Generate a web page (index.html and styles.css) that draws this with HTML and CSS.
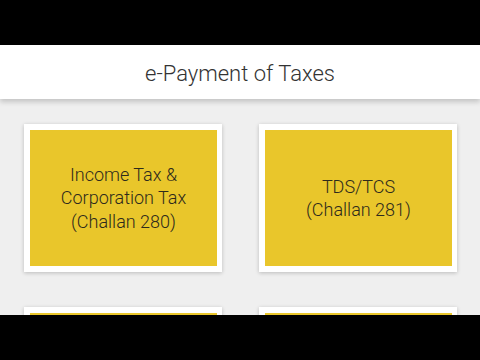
FILE: index.html
```html
<!DOCTYPE html>
<html>
<head>
<meta charset="utf-8">
<link rel="stylesheet" href="styles.css">
</head>
<body>
<div class="letterbox"></div>
<div class="screen">
  <header class="appbar">e-Payment of Taxes</header>
  <main class="grid">
    <div class="card"><div class="tile">Income Tax &amp;<br>Corporation Tax<br>(Challan 280)</div></div>
    <div class="card"><div class="tile">TDS/TCS<br>(Challan 281)</div></div>
    <div class="card"><div class="tile"></div></div>
    <div class="card"><div class="tile"></div></div>
  </main>
</div>
<div class="letterbox"></div>
</body>
</html>
```
FILE: styles.css
```css
html, body {
  margin: 0;
  padding: 0;
  background: #000;
  width: 480px;
  height: 360px;
  overflow: hidden;
  font-family: Roboto, "Liberation Sans", sans-serif;
}
.letterbox {
  height: 45px;
  background: #000;
}
.screen {
  height: 270px;
  background: #efefef;
  overflow: hidden;
  display: flex;
  flex-direction: column;
}
.appbar {
  flex: none;
  height: 54px;
  background: #fff;
  display: flex;
  align-items: center;
  justify-content: center;
  font-size: 22px;
  font-weight: 300;
  color: #333;
  box-shadow: 0 3px 5px rgba(0,0,0,0.18);
  position: relative;
  z-index: 1;
  padding-top: 2px;
  box-sizing: border-box;
}
.grid {
  display: grid;
  grid-template-columns: 198px 198px;
  column-gap: 37px;
  row-gap: 35px;
  padding: 25px 23px 0 24px;
}
.card {
  height: 148px;
  background: #fff;
  padding: 6px 5px 6px 6px;
  box-sizing: border-box;
  box-shadow: 0 1px 4px rgba(0,0,0,0.22);
}
.tile {
  height: 100%;
  background: #e9c62b;
  display: flex;
  align-items: center;
  justify-content: center;
  text-align: center;
  font-size: 18px;
  font-weight: 300;
  line-height: 23.5px;
  color: #2e2a1c;
}
```
